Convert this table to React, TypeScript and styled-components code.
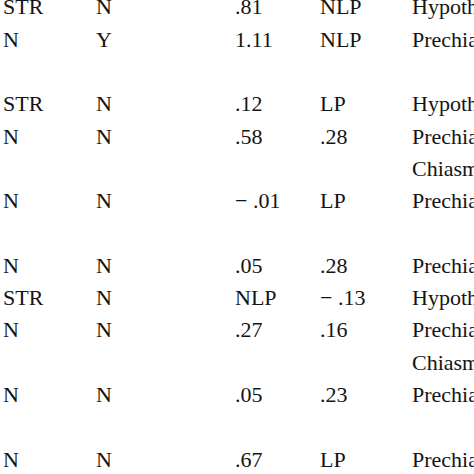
import React from "react";
import styled, { createGlobalStyle } from "styled-components";

const Global = createGlobalStyle`
  html, body { margin: 0; padding: 0; background: #fff; overflow: hidden; }
  body { width: 474px; height: 474px; }
`;

const Table = styled.div`
  width: 474px;
  height: 474px;
  overflow: hidden;
  font-family: "Liberation Serif", "Times New Roman", serif;
  font-size: 22px;
  color: #141414;
`;

const Body = styled.div`
  margin-top: -8.6px;
  padding-left: 3px;
  display: flex;
  flex-direction: column;
`;

const Row = styled.div`
  display: grid;
  grid-template-columns: 93px 139px 85px 92px 1fr;
  line-height: 32.3px;
  height: 32.3px;
  white-space: nowrap;
`;

const Cell = styled.div`
  overflow: visible;
`;

const rows: string[][] = [
  ["STR", "N", ".81", "NLP", "Hypothalamus"],
  ["N", "Y", "1.11", "NLP", "Prechiasmatic"],
  ["", "", "", "", ""],
  ["STR", "N", ".12", "LP", "Hypothalamus"],
  ["N", "N", ".58", ".28", "Prechiasmatic"],
  ["", "", "", "", "Chiasmatic"],
  ["N", "N", "\u2212 .01", "LP", "Prechiasmatic"],
  ["", "", "", "", ""],
  ["N", "N", ".05", ".28", "Prechiasmatic"],
  ["STR", "N", "NLP", "\u2212 .13", "Hypothalamus"],
  ["N", "N", ".27", ".16", "Prechiasmatic"],
  ["", "", "", "", "Chiasmatic"],
  ["N", "N", ".05", ".23", "Prechiasmatic"],
  ["", "", "", "", ""],
  ["N", "N", ".67", "LP", "Prechiasmatic"],
];

export default function App() {
  return (
    <>
      <Global />
      <Table>
        <Body>
          {rows.map((r, i) => (
            <Row key={i}>
              {r.map((c, j) => (
                <Cell key={j}>{c || "\u00a0"}</Cell>
              ))}
            </Row>
          ))}
        </Body>
      </Table>
    </>
  );
}
